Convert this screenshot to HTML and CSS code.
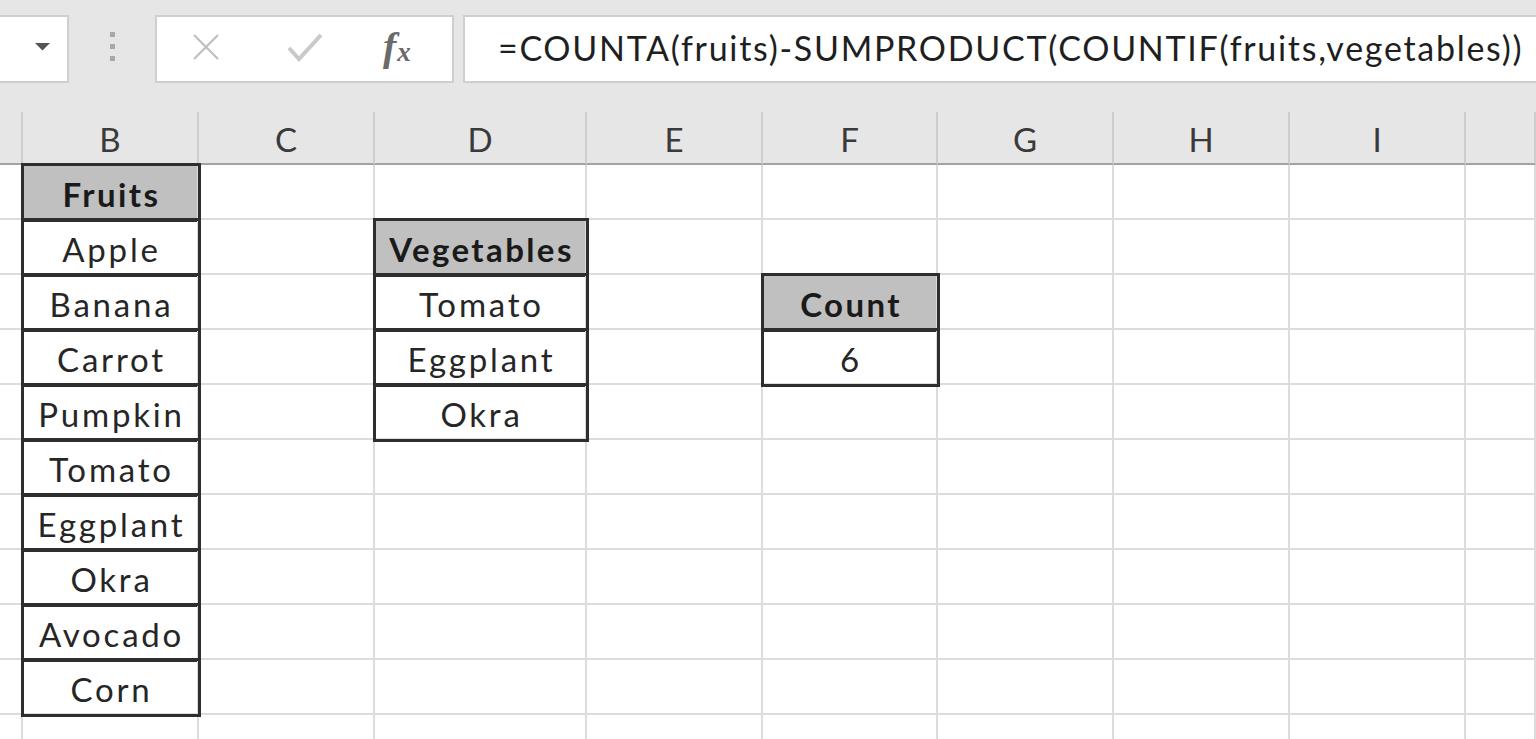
FILE: index.html
```html
<!DOCTYPE html>
<html lang="en">
<head>
    <meta charset="UTF-8">
    <title>COUNTA minus SUMPRODUCT</title>
    <link rel="stylesheet" href="styles.css">
</head>
<body>
<div class="toolbar">
    <div class="namebox">
        <svg class="arrow" width="15" height="9" viewBox="0 0 15 9"><path d="M0 1h15L7.5 8.5z" fill="#555"/></svg>
    </div>
    <div class="grip"><i></i><i></i><i></i></div>
    <div class="btnbox">
        <svg class="ico" width="32" height="28" viewBox="0 0 32 28"><path d="M4 2L28 26M28 2L4 26" stroke="#bfbfbf" stroke-width="2.2" fill="none"/></svg>
        <svg class="ico" width="38" height="32" viewBox="0 0 38 32"><path d="M3 17L13 28L35 4" stroke="#c9c9c9" stroke-width="4" fill="none"/></svg>
        <span class="fx">f<sub>x</sub></span>
    </div>
    <div class="formula">=COUNTA(fruits)-SUMPRODUCT(COUNTIF(fruits,vegetables))</div>
</div>

<div class="sheet" id="sheet"></div>

<script>
    // 表格数据：列 -> 行 -> 文字
    const cols = ["", "B", "C", "D", "E", "F", "G", "H", "I", ""];
    const data = {
        1: { col: 1, head: "Fruits", items: ["Apple", "Banana", "Carrot", "Pumpkin", "Tomato", "Eggplant", "Okra", "Avocado", "Corn"] },
        2: { col: 3, head: "Vegetables", items: ["Tomato", "Eggplant", "Okra"] },
        3: { col: 5, head: "Count", items: ["6"] }
    };
    const starts = { 1: 0, 3: 1, 5: 2 };  // 每个区块开始的行

    const sheet = document.getElementById("sheet");
    cols.forEach(c => {
        const h = document.createElement("div");
        h.className = "colhead";
        h.textContent = c;
        sheet.appendChild(h);
    });

    for (let r = 0; r < 11; r++) {
        for (let c = 0; c < cols.length; c++) {
            const cell = document.createElement("div");
            cell.className = "cell";
            Object.values(data).forEach(d => {
                if (d.col !== c) return;
                const i = r - starts[c];
                if (i === 0) {
                    cell.textContent = d.head;
                    cell.classList.add("box", "head");
                } else if (i > 0 && i <= d.items.length) {
                    cell.textContent = d.items[i - 1];
                    cell.classList.add("box");
                }
            });
            sheet.appendChild(cell);
        }
    }
</script>
</body>
</html>
```

FILE: styles.css
```css
html, body {
    margin: 0;
    height: 100%;
    overflow: hidden;
    background: #fff;
    font-family: Lato, "Liberation Sans", sans-serif;
    color: #262626;
}

.toolbar {
    height: 112px;
    box-sizing: border-box;
    padding-top: 15px;
    background: #e6e6e6;
    display: flex;
    align-items: flex-start;
}
.namebox {
    width: 71px;
    height: 68px;
    margin-left: -2px;
    box-sizing: border-box;
    background: #fff;
    border: 2px solid #cfcfcf;
    display: flex;
    align-items: center;
    justify-content: flex-end;
    padding-right: 17px;
    padding-bottom: 6px;
}
.grip {
    width: 86px;
    height: 68px;
    display: flex;
    flex-direction: column;
    align-items: center;
    justify-content: center;
    gap: 7px;
    padding-bottom: 6px;
    box-sizing: border-box;
}
.grip i {
    width: 5px;
    height: 5px;
    background: #a8a8a8;
}
.btnbox {
    width: 299px;
    height: 68px;
    box-sizing: border-box;
    background: #fff;
    border: 2px solid #cfcfcf;
    display: flex;
    align-items: center;
    padding-left: 33px;
    padding-bottom: 4px;
}
.btnbox .ico + .ico {
    margin-left: 64px;
}
.fx {
    margin-left: 59px;
    font-family: "Liberation Serif", serif;
    font-style: italic;
    font-weight: bold;
    font-size: 40px;
    line-height: 1;
    color: #6a6a6a;
}
.fx sub {
    font-size: 27px;
    vertical-align: -1px;
    margin-left: 1px;
}
.formula {
    flex: 1;
    margin-left: 9px;
    margin-right: -4px;
    height: 68px;
    box-sizing: border-box;
    background: #fff;
    border: 2px solid #cfcfcf;
    padding-left: 33px;
    padding-bottom: 4px;
    display: flex;
    align-items: center;
    font-size: 34px;
    letter-spacing: 1.7px;
    white-space: nowrap;
    color: #1f1f1f;
}

.sheet {
    display: grid;
    grid-template-columns: 23px 176px 176px 212px 176px 175px 176px 176px 176px 1fr;
    grid-template-rows: 53px;
    grid-auto-rows: 55px;
}
.colhead {
    background: #e6e6e6;
    border-right: 2px solid #cdcdcd;
    border-bottom: 2px solid #a3a3a3;
    display: flex;
    align-items: center;
    justify-content: center;
    padding-top: 2px;
    box-sizing: border-box;
    font-size: 33px;
    color: #3a3a3a;
}
.cell {
    border-right: 2px solid #dcdcdc;
    border-bottom: 2px solid #dcdcdc;
    display: flex;
    align-items: center;
    justify-content: center;
    font-size: 33px;
    letter-spacing: 2.8px;
    padding-top: 5px;
    padding-left: 3px;
    box-sizing: border-box;
}
.box {
    position: relative;
    z-index: 1;
    outline: 3px solid #2e2e2e;
    outline-offset: -1px;
}
.head {
    background: #c0c0c0;
    font-weight: bold;
    letter-spacing: 2.4px;
    color: #1a1a1a;
}
```
